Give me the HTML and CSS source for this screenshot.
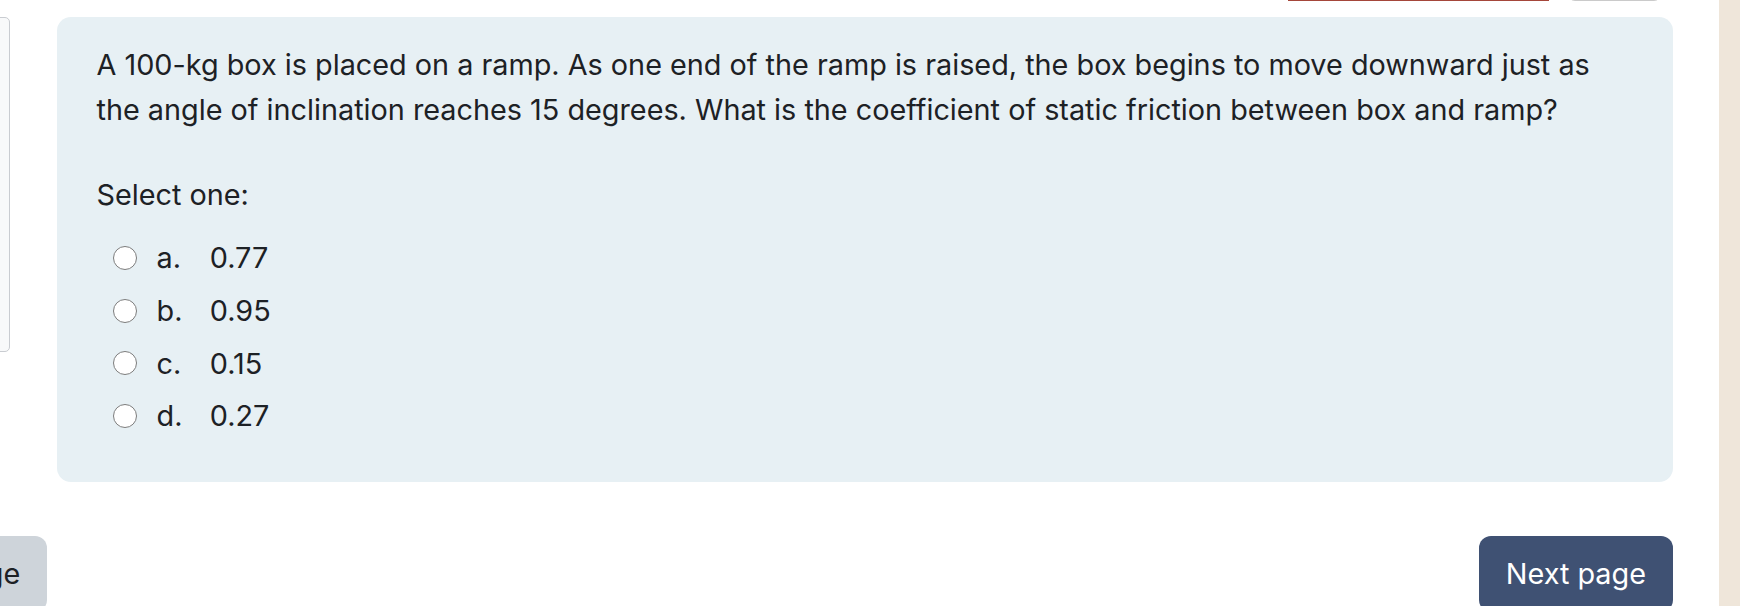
FILE: index.html
```html
<!DOCTYPE html>
<html lang="en">
<head>
<meta charset="utf-8">
<title>Quiz question</title>
<link rel="stylesheet" href="styles.css">
</head>
<body>
<div class="layout">
  <main class="page">
    <div class="topbar">
      <span class="edge edge-danger"></span>
      <span class="edge edge-plain"></span>
    </div>
    <div class="que">
      <div class="info"></div>
      <div class="formulation">
        <div class="qtext">A 100-kg box is placed on a ramp. As one end of the ramp is raised, the box begins to move downward just as the angle of inclination reaches 15 degrees. What is the coefficient of static friction between box and ramp?</div>
        <div class="prompt">Select one:</div>
        <div class="answer">
          <label class="opt"><span class="radio"></span><span class="num">a.</span><span class="val">0.77</span></label>
          <label class="opt"><span class="radio"></span><span class="num">b.</span><span class="val">0.95</span></label>
          <label class="opt"><span class="radio"></span><span class="num">c.</span><span class="val">0.15</span></label>
          <label class="opt"><span class="radio"></span><span class="num">d.</span><span class="val">0.27</span></label>
        </div>
      </div>
    </div>
    <div class="nav">
      <button class="btn btn-prev">Previous page</button>
      <button class="btn btn-next">Next page</button>
    </div>
  </main>
  <aside class="drawer"></aside>
</div>
</body>
</html>
```
FILE: styles.css
```css
html, body {
  margin: 0;
  padding: 0;
  width: 1740px;
  height: 606px;
  overflow: hidden;
  background: #ffffff;
}

body {
  font-family: "Inter", "Noto Sans", "Liberation Sans", sans-serif;
  font-size: 28.8px;
  color: #1d2125;
}

.layout {
  display: flex;
  width: 1740px;
  height: 606px;
}

.page {
  flex: 1;
  min-width: 0;
  margin-left: -201px;
  padding-right: 46px;
}

.drawer {
  width: 21px;
  flex: none;
  background: #efe6da;
}

.topbar {
  display: flex;
  justify-content: flex-end;
  align-items: flex-end;
  gap: 18px;
  height: 1px;
  margin-right: 11px;
  margin-bottom: 16px;
}

.edge {
  display: block;
  height: 40px;
  box-sizing: border-box;
  background: #ffffff;
  flex: none;
}

.edge-danger {
  width: 261px;
  border-bottom: 1px solid #a5463a;
}

.edge-plain {
  width: 95px;
  border: 1px solid #cacaca;
  border-radius: 8px;
}

.que {
  display: flex;
  align-items: flex-start;
}

.info {
  flex: none;
  width: 211px;
  height: 335px;
  box-sizing: border-box;
  background: #f8f9fa;
  border: 1px solid #c9ccd1;
  border-radius: 5px;
}

.formulation {
  flex: 1;
  margin-left: 46.5px;
  height: 465px;
  box-sizing: border-box;
  padding: 25px 40px 0 40px;
  background: #e7f0f4;
  border-radius: 14px;
}

.qtext {
  line-height: 45px;
  margin-bottom: 40px;
}

.prompt {
  line-height: 45px;
  margin-bottom: 14.67px;
}

.answer {
  display: flex;
  flex-direction: column;
}

.opt {
  display: flex;
  align-items: center;
  height: 52.67px;
  line-height: 45px;
}

.radio {
  flex: none;
  width: 24px;
  height: 24px;
  box-sizing: border-box;
  margin-left: 16.5px;
  margin-right: 19.5px;
  border: 1.7px solid #7c7c7c;
  border-radius: 50%;
  background: #ffffff;
}

.num {
  width: 53.3px;
  flex: none;
}

.nav {
  display: flex;
  justify-content: space-between;
  align-items: flex-start;
  margin-top: 54px;
}

.btn {
  font-family: inherit;
  font-size: 28.8px;
  line-height: 45px;
  padding: 15px 27px 16px;
  border: none;
  border-radius: 12px;
  cursor: pointer;
}

.btn-prev {
  background: #ced4da;
  color: #1d2125;
}

.btn-next {
  background: #3f5173;
  color: #ffffff;
}
```
